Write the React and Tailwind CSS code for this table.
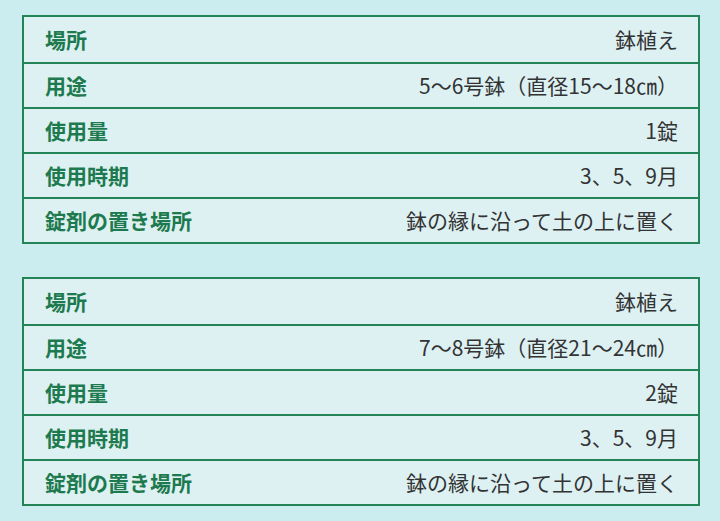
const rows1 = [
  ['場所', '鉢植え'],
  ['用途', '5～6号鉢（直径15～18㎝）'],
  ['使用量', '1錠'],
  ['使用時期', '3、5、9月'],
  ['錠剤の置き場所', '鉢の縁に沿って土の上に置く'],
]

const rows2 = [
  ['場所', '鉢植え'],
  ['用途', '7～8号鉢（直径21～24㎝）'],
  ['使用量', '2錠'],
  ['使用時期', '3、5、9月'],
  ['錠剤の置き場所', '鉢の縁に沿って土の上に置く'],
]

const SpecTable = ({ rows }) => (
  <div className="border-2 border-[#238458] bg-[#ddf1f3]">
    {rows.map(([label, value], i) => (
      <div
        key={i}
        className={`flex items-center justify-between h-[45px] pl-[21px] pr-[20px] ${i > 0 ? 'border-t-2 border-[#238458]' : ''}`}
      >
        <span className="text-[21px] font-bold text-[#1d7a4e]">{label}</span>
        <span className="text-[21px] text-[#333]">{value}</span>
      </div>
    ))}
  </div>
)

export default function App() {
  return (
    <div
      className="w-[720px] h-[521px] bg-[#cbedf0] pt-[15px] pl-[22px] pr-[20px] flex flex-col gap-[33px]"
      style={{ fontFamily: '"Noto Sans CJK JP", "Noto Sans", sans-serif' }}
    >
      <SpecTable rows={rows1} />
      <SpecTable rows={rows2} />
    </div>
  )
}
